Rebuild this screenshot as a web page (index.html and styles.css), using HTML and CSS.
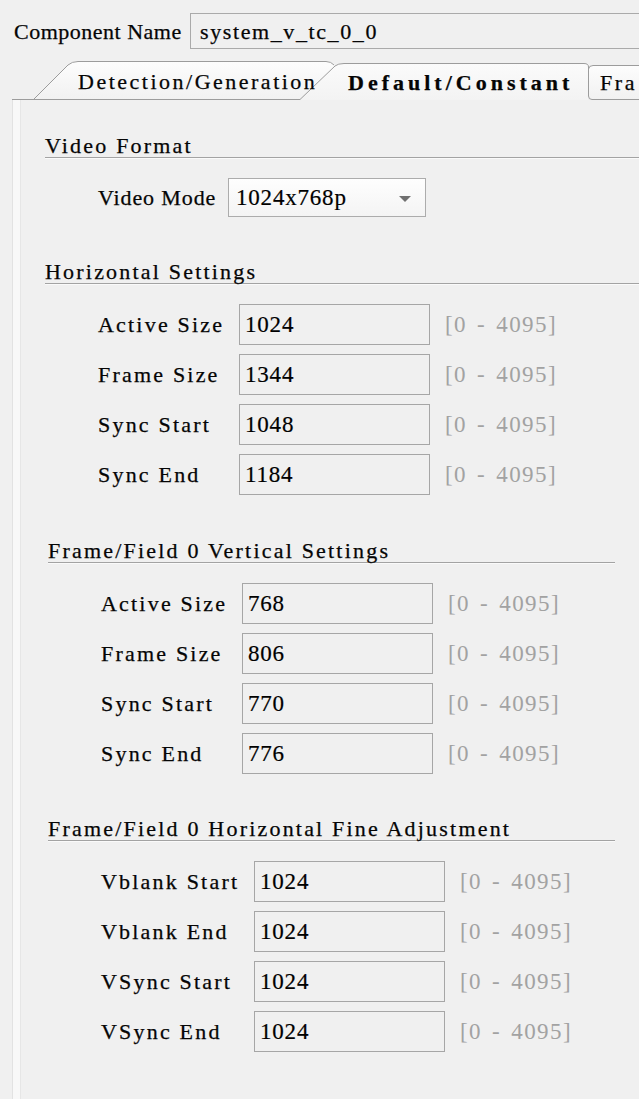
FILE: index.html
```html
<!DOCTYPE html>
<html>
<head>
<meta charset="utf-8">
<link rel="stylesheet" href="styles.css">
</head>
<body>
<div class="top">
  <span class="mono lbl-top">Component Name</span>
  <div class="namebox mono">system_v_tc_0_0</div>
</div>

<div class="tabs">
  <svg class="tabshape" width="639" height="40" viewBox="0 0 639 40">
    <defs>
      <linearGradient id="g1" x1="0" y1="0" x2="0" y2="1">
        <stop offset="0" stop-color="#fdfdfd"/>
        <stop offset="1" stop-color="#f1f1f1"/>
      </linearGradient>
      <linearGradient id="g2" x1="0" y1="0" x2="0" y2="1">
        <stop offset="0" stop-color="#fbfbfb"/>
        <stop offset="1" stop-color="#f3f3f3"/>
      </linearGradient>
    </defs>
    <path d="M33,40 L68,5 Q72,1 78,1 L326,1 Q331,1 334,5 L345,40 Z" fill="url(#g1)"/>
    <path d="M33.5,39.5 L68,5 Q72,1.5 78,1.5 L326,1.5 Q331,1.5 334,5" fill="none" stroke="#9c9c9c"/>
    <path d="M589,40 L589,9 Q589,5 593,5 L639,5 L639,40 Z" fill="url(#g1)"/>
    <path d="M588.5,9 Q589,5.5 593,5.5 L639,5.5" fill="none" stroke="#9c9c9c"/>
    <path d="M300,40 L335,6 Q338,3 344,3 L584,3 Q588,3 588,7 L588,40 Z" fill="url(#g2)"/>
    <path d="M300,39.5 L335,6 Q338,3.5 344,3.5 L584,3.5 Q588.5,3.5 588.5,7 L588.5,36 Q588.5,39.5 592,39.5 L639,39.5" fill="none" stroke="#9c9c9c"/>
    <line x1="12" y1="39.5" x2="300" y2="39.5" stroke="#9c9c9c"/>
  </svg>
  <span class="tab mono t1">Detection/Generation</span>
  <span class="tab mono t2">Default/Constant</span>
  <span class="tab mono t3">Fra</span>
</div>

<div class="panel">
  <section class="sec">
    <h2 class="head mono">Video Format</h2>
    <div class="grid combo-grid">
      <span class="mono lbl tight">Video Mode</span>
      <div class="combo">
        <span class="val">1024x768p</span>
        <span class="arrow"></span>
      </div>
    </div>
  </section>

  <section class="sec">
    <h2 class="head mono">Horizontal Settings</h2>
    <div class="grid">
      <span class="mono lbl">Active Size</span><div class="box val">1024</div><span class="range">[0 - 4095]</span>
      <span class="mono lbl">Frame Size</span><div class="box val">1344</div><span class="range">[0 - 4095]</span>
      <span class="mono lbl">Sync Start</span><div class="box val">1048</div><span class="range">[0 - 4095]</span>
      <span class="mono lbl">Sync End</span><div class="box val">1184</div><span class="range">[0 - 4095]</span>
    </div>
  </section>

  <div class="nested">
    <section class="sec">
      <h2 class="head mono">Frame/Field 0 Vertical Settings</h2>
      <div class="grid">
        <span class="mono lbl">Active Size</span><div class="box val">768</div><span class="range">[0 - 4095]</span>
        <span class="mono lbl">Frame Size</span><div class="box val">806</div><span class="range">[0 - 4095]</span>
        <span class="mono lbl">Sync Start</span><div class="box val">770</div><span class="range">[0 - 4095]</span>
        <span class="mono lbl">Sync End</span><div class="box val">776</div><span class="range">[0 - 4095]</span>
      </div>
    </section>

    <section class="sec">
      <h2 class="head mono">Frame/Field 0 Horizontal Fine Adjustment</h2>
      <div class="grid wide">
        <span class="mono lbl">Vblank Start</span><div class="box val">1024</div><span class="range">[0 - 4095]</span>
        <span class="mono lbl">Vblank End</span><div class="box val">1024</div><span class="range">[0 - 4095]</span>
        <span class="mono lbl">VSync Start</span><div class="box val">1024</div><span class="range">[0 - 4095]</span>
        <span class="mono lbl">VSync End</span><div class="box val">1024</div><span class="range">[0 - 4095]</span>
      </div>
    </section>
  </div>
</div>
</body>
</html>
```

FILE: styles.css
```css
html, body {
  margin: 0;
  padding: 0;
  background: #f0f0f0;
}
body {
  width: 639px;
  height: 1099px;
  overflow: hidden;
  color: #050505;
  display: flex;
  flex-direction: column;
}
.mono {
  font-family: "Liberation Serif", "Times New Roman", serif;
  font-size: 22px;
  letter-spacing: 2.2px;
  line-height: 22px;
  white-space: nowrap;
  -webkit-text-stroke: 0.25px currentColor;
}
.top {
  display: flex;
  align-items: center;
  padding: 13px 0 0 14px;
  height: 36px;
  flex: none;
}
.lbl-top {
  width: 168px;
  margin-right: 8px;
  letter-spacing: 0.5px;
  padding-top: 2px;
}
.namebox {
  flex: 1;
  height: 36px;
  box-sizing: border-box;
  border: 1px solid #aaaaaa;
  border-right: none;
  background: #f0f0f0;
  display: flex;
  align-items: center;
  padding-left: 9px;
  letter-spacing: 1.6px;
  padding-top: 2px;
}
.tabs {
  position: relative;
  margin-top: 11px;
  height: 40px;
  display: flex;
  align-items: center;
  flex: none;
}
.tabshape {
  position: absolute;
  left: 0;
  top: 0;
}
.tab {
  position: relative;
  padding-top: 4px;
}
.t1 {
  margin-left: 78px;
  width: 240px;
  letter-spacing: 2.5px;
}
.t2 {
  margin-left: 30px;
  width: 224px;
  font-weight: bold;
  letter-spacing: 4px;
  padding-top: 6px;
}
.t3 {
  margin-left: 28px;
  padding-top: 6px;
  letter-spacing: 2.6px;
}
.panel {
  flex: 1;
  margin-left: 12px;
  border-left: 1px solid #e2e2e2;
  box-shadow: inset 7px 0 0 #f8f8f8, inset 8px 0 0 #e6e6e6;
  padding: 35px 0 0 32px;
}
.sec {
  margin-bottom: 44px;
}
.nested .sec:last-child {
  margin-bottom: 0;
}
.head {
  margin: 0 0 20px 0;
  height: 23px;
  padding-top: 0;
  box-sizing: border-box;
  font-weight: normal;
  border-bottom: 1px solid #a3a3a3;
  box-shadow: 0 1px 0 #fafafa;
}
.nested {
  margin: 0 24px 0 3px;
  padding-top: 1px;
}
.grid {
  display: grid;
  grid-template-columns: 132px 191px max-content;
  grid-auto-rows: 41px;
  column-gap: 9px;
  row-gap: 9px;
  align-items: center;
  padding-left: 53px;
}
.grid.wide {
  grid-template-columns: 144px 191px max-content;
}
.combo-grid {
  grid-template-columns: 120px 198px;
  grid-auto-rows: 39px;
  column-gap: 10px;
}
.lbl {
  display: block;
  padding-top: 1px;
}
.lbl.tight {
  letter-spacing: 0.9px;
}
.val {
  font-family: "Liberation Serif", "Times New Roman", serif;
  font-size: 23px;
  letter-spacing: 0.8px;
  color: #000;
  -webkit-text-stroke: 0.2px currentColor;
}
.box {
  height: 41px;
  box-sizing: border-box;
  border: 1px solid #a6a6a6;
  background: #f0f0f0;
  display: flex;
  align-items: center;
  padding-left: 5px;
}
.combo {
  height: 39px;
  box-sizing: border-box;
  border: 1px solid #acacac;
  background: linear-gradient(#fefefe, #f4f4f4);
  display: flex;
  align-items: center;
  justify-content: space-between;
  padding: 0 14px 0 7px;
}
.arrow {
  width: 0;
  height: 0;
  border-left: 6px solid transparent;
  border-right: 6px solid transparent;
  border-top: 6px solid #707070;
  margin-top: 2px;
}
.range {
  margin-left: 6px;
  font-family: "Liberation Serif", "Times New Roman", serif;
  font-size: 23px;
  letter-spacing: 1.4px;
  word-spacing: 3px;
  color: #a2a2a2;
  white-space: nowrap;
}
```
